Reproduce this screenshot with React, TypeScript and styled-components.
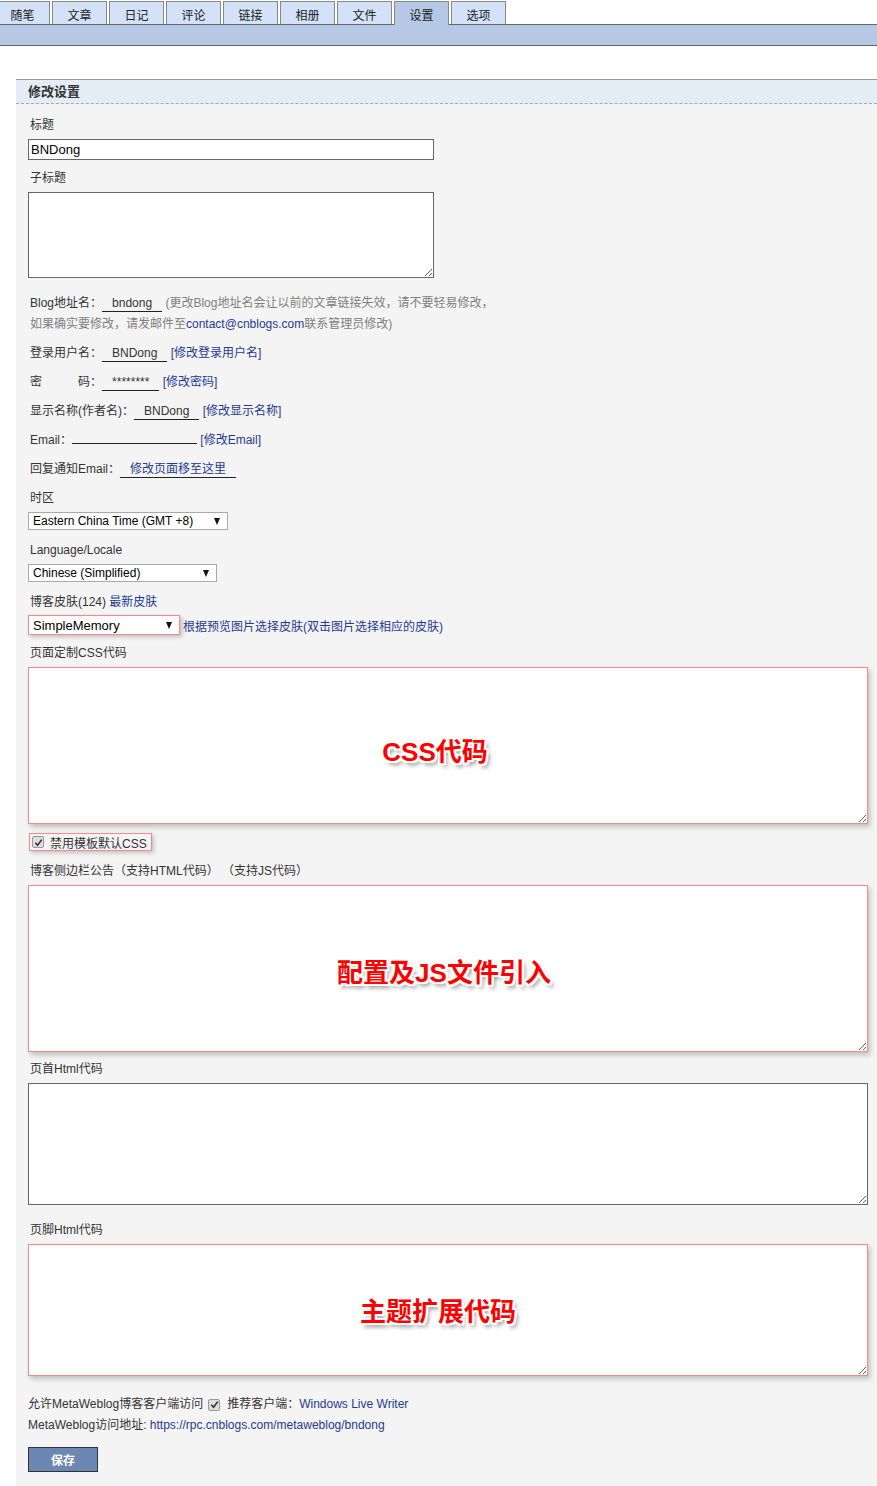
import React from "react";
import styled, { createGlobalStyle } from "styled-components";

const GlobalStyle = createGlobalStyle`
  body {
    margin: 0;
    background: #fff;
    font-family: "Liberation Sans", "Noto Sans CJK SC", sans-serif;
    font-size: 12px;
    color: #333;
  }
`;

const tabs = ["随笔", "文章", "日记", "评论", "链接", "相册", "文件", "设置", "选项"];

const TabRow = styled.div`
  display: flex;
  align-items: flex-end;
  gap: 2px;
  margin-left: -5px;
  padding-top: 1px;
  height: 23px;
`;

const Tab = styled.div<{ $active?: boolean }>`
  position: relative;
  z-index: ${(p) => (p.$active ? 1 : 0)};
  width: 55px;
  height: ${(p) => (p.$active ? "24px" : "23px")};
  margin-bottom: ${(p) => (p.$active ? "-1px" : "0")};
  box-sizing: border-box;
  border: 1px solid #888;
  border-bottom: none;
  background: ${(p) => (p.$active ? "#b5c9e7" : "#d3e2f7")};
  display: flex;
  justify-content: center;
  padding-top: 6px;
  color: #222;
  line-height: 16px;
`;

const SubBar = styled.div`
  height: 20px;
  background: #b5c9e7;
  border-top: 1px solid #666;
  border-bottom: 1px solid #666;
`;

const Panel = styled.div`
  margin: 33px 0 0 16px;
  border-top: 1px solid #999;
  background: #f4f4f4;
`;

const PanelHead = styled.div`
  height: 23px;
  line-height: 23px;
  padding-left: 12px;
  background: #e4ecf6;
  border-bottom: 1px dashed #aaa;
  font-size: 13px;
  font-weight: bold;
  color: #333;
`;

const Form = styled.div`
  padding: 11px 9px 15px 12px;
`;

const Label = styled.div<{ $top?: number }>`
  margin-top: ${(p) => p.$top ?? 0}px;
  margin-bottom: 4px;
  padding-left: 2px;
  line-height: 20px;
`;

const TextInput = styled.input`
  display: block;
  box-sizing: border-box;
  width: 406px;
  height: 21px;
  margin: 0;
  padding: 0 2px;
  border: 1px solid #666;
  background: #fff;
  font-family: inherit;
  font-size: 13px;
  color: #000;
  outline: none;
`;

const Area = styled.textarea<{ $w: number; $h: number; $marked?: boolean }>`
  display: block;
  box-sizing: border-box;
  width: ${(p) => p.$w}px;
  height: ${(p) => p.$h}px;
  margin: 0;
  border: 1px solid ${(p) => (p.$marked ? "#f58a8a" : "#666")};
  box-shadow: ${(p) => (p.$marked ? "2px 3px 5px rgba(0, 0, 0, 0.22)" : "none")};
  background: #fff;
  font-family: inherit;
  outline: none;
`;

const AreaWrap = styled.div`
  position: relative;
  width: 840px;
`;

const Note = styled.div<{ $dx: number; $dy: number }>`
  position: absolute;
  inset: 0;
  display: flex;
  align-items: center;
  justify-content: center;
  pointer-events: none;
  transform: translate(${(p) => p.$dx}px, ${(p) => p.$dy}px);
  font-size: 26px;
  font-weight: bold;
  color: #f00;
  text-shadow: 1px 1px 0 #fff, -1px -1px 0 #fff, 1px -1px 0 #fff, -1px 1px 0 #fff,
    2px 0 0 #fff, -2px 0 0 #fff, 0 2px 0 #fff, 0 -2px 0 #fff, 2px 2px 0 #fff,
    -2px -2px 0 #fff, 2px -2px 0 #fff, -2px 2px 0 #fff, 3px 4px 4px rgba(0, 0, 0, 0.45);
`;

const Para = styled.div<{ $top?: number; $flush?: boolean }>`
  margin-top: ${(p) => p.$top ?? 0}px;
  padding-left: ${(p) => (p.$flush ? 0 : 2)}px;
  line-height: 21px;
`;

const Muted = styled.span`
  color: #808080;
`;

const Link = styled.a`
  color: #1f3a93;
  text-decoration: none;
  cursor: pointer;
`;

const Value = styled.span<{ $w?: number }>`
  display: inline-block;
  min-width: ${(p) => p.$w ?? 0}px;
  padding: 0 10px;
  line-height: 15px;
  border-bottom: 1px solid #222;
  vertical-align: baseline;
`;

const FakeSelect = styled.div<{ $w: number }>`
  display: flex;
  align-items: center;
  justify-content: space-between;
  box-sizing: border-box;
  width: ${(p) => p.$w}px;
  height: 18px;
  padding: 0 7px 0 4px;
  border: 1px solid #a9a9a9;
  background: #fff;
  color: #000;
`;

const Arrow = styled.span`
  width: 0;
  height: 0;
  border-left: 3.5px solid transparent;
  border-right: 3.5px solid transparent;
  border-top: 7px solid #111;
`;

const SkinRow = styled.div`
  display: flex;
  align-items: center;
  gap: 3px;
  margin-top: -1px;
`;

const SkinSelect = styled(FakeSelect)`
  height: 20px;
  border-color: #f58a8a;
  box-shadow: 2px 2px 4px rgba(0, 0, 0, 0.22);
  font-size: 13px;
`;

const MarkedBox = styled.div`
  display: inline-flex;
  align-items: center;
  gap: 6px;
  margin: 9px 0 0 1px;
  height: 18px;
  box-sizing: border-box;
  padding: 0 4px 0 2px;
  border: 1px solid #f58a8a;
  box-shadow: 2px 2px 4px rgba(0, 0, 0, 0.2);
`;

const CheckBox = styled.span`
  display: inline-flex;
  align-items: center;
  justify-content: center;
  box-sizing: border-box;
  width: 12px;
  height: 12px;
  border: 1px solid #999;
  border-radius: 2px;
  background: #dedede;
  vertical-align: -2px;
`;

const Inline = styled.span`
  display: inline-flex;
  align-items: center;
  margin: 0 7px 0 5px;
  vertical-align: middle;
`;

const SaveButton = styled.button`
  display: block;
  margin-top: 11px;
  width: 70px;
  height: 25px;
  border: 1px solid #333;
  background: #6d87b3;
  color: #fff;
  font-family: inherit;
  font-size: 12px;
  font-weight: bold;
  cursor: pointer;
`;

const Check = () => (
  <CheckBox>
    <svg width="9" height="9" viewBox="0 0 10 10">
      <path d="M1.5 5.2 L4 8 L8.6 1.8" fill="none" stroke="#333" strokeWidth="1.8" />
    </svg>
  </CheckBox>
);

const Marked = ({
  h,
  text,
  dx,
  dy,
}: {
  h: number;
  text: string;
  dx: number;
  dy: number;
}) => (
  <AreaWrap>
    <Area $w={840} $h={h} $marked />
    <Note $dx={dx} $dy={dy}>{text}</Note>
  </AreaWrap>
);

export default function App() {
  return (
    <>
      <GlobalStyle />
      <TabRow>
        {tabs.map((t) => (
          <Tab key={t} $active={t === "设置"}>
            {t}
          </Tab>
        ))}
      </TabRow>
      <SubBar />

      <Panel>
        <PanelHead>修改设置</PanelHead>
        <Form>
          <Label>标题</Label>
          <TextInput defaultValue="BNDong" />

          <Label $top={8}>子标题</Label>
          <Area $w={406} $h={86} />

          <Para $top={15}>
            Blog地址名：<Value>bndong</Value>{" "}
            <Muted>(更改Blog地址名会让以前的文章链接失效，请不要轻易修改，</Muted>
            <br />
            <Muted>如果确实要修改，请发邮件至</Muted>
            <Link>contact@cnblogs.com</Link>
            <Muted>联系管理员修改)</Muted>
          </Para>
          <Para $top={8}>
            登录用户名：<Value>BNDong</Value> <Link>[修改登录用户名]</Link>
          </Para>
          <Para $top={8}>
            密{"\u3000\u3000\u3000"}码：<Value>********</Value> <Link>[修改密码]</Link>
          </Para>
          <Para $top={8}>
            显示名称(作者名)：<Value>BNDong</Value> <Link>[修改显示名称]</Link>
          </Para>
          <Para $top={8}>
            Email：<Value $w={105} /> <Link>[修改Email]</Link>
          </Para>
          <Para $top={8}>
            回复通知Email：<Value>
              <Link>修改页面移至这里</Link>
            </Value>
          </Para>

          <Label $top={8}>时区</Label>
          <FakeSelect $w={200}>
            Eastern China Time (GMT +8)
            <Arrow />
          </FakeSelect>

          <Label $top={10}>Language/Locale</Label>
          <FakeSelect $w={189}>
            Chinese (Simplified)
            <Arrow />
          </FakeSelect>

          <Label $top={10}>
            博客皮肤(124) <Link>最新皮肤</Link>
          </Label>
          <SkinRow>
            <SkinSelect $w={152}>
              SimpleMemory
              <Arrow />
            </SkinSelect>
            <Link>根据预览图片选择皮肤(双击图片选择相应的皮肤)</Link>
          </SkinRow>

          <Label $top={8}>页面定制CSS代码</Label>
          <Marked h={157} text="CSS代码" dx={-13} dy={4} />

          <MarkedBox>
            <Check />
            禁用模板默认CSS
          </MarkedBox>

          <Label $top={10}>博客侧边栏公告（支持HTML代码） （支持JS代码）</Label>
          <Marked h={167} text="配置及JS文件引入" dx={-4} dy={2} />

          <Label $top={7}>页首Html代码</Label>
          <Area $w={840} $h={122} />

          <Label $top={15}>页脚Html代码</Label>
          <Marked h={132} text="主题扩展代码" dx={-10} dy={-1} />

          <Para $top={18} $flush>
            允许MetaWeblog博客客户端访问
            <Inline>
              <Check />
            </Inline>
            推荐客户端：<Link>Windows Live Writer</Link>
          </Para>
          <Para $flush>
            MetaWeblog访问地址: <Link>https://rpc.cnblogs.com/metaweblog/bndong</Link>
          </Para>

          <SaveButton>保存</SaveButton>
        </Form>
      </Panel>
    </>
  );
}
